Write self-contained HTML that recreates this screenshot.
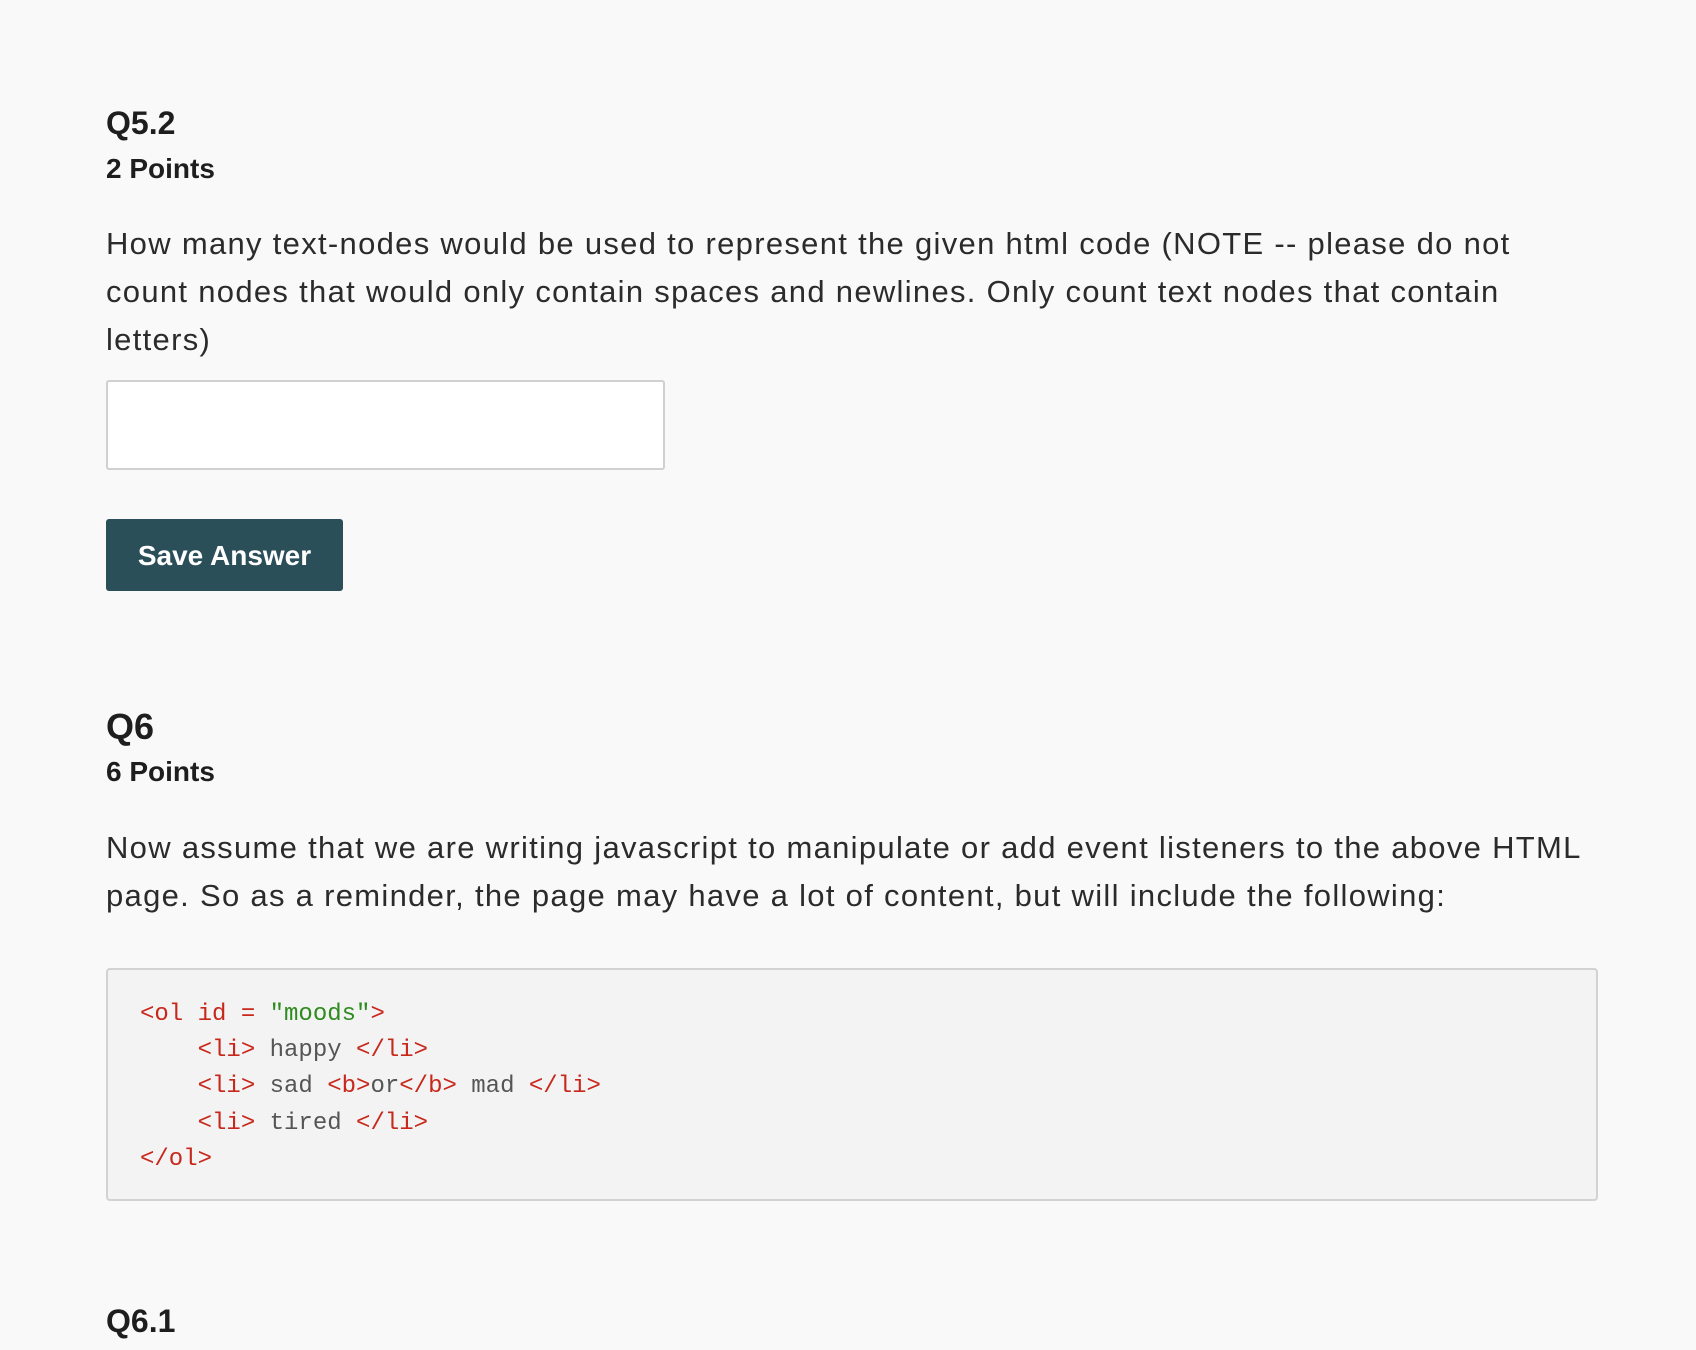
<!DOCTYPE html>
<html><head><meta charset="utf-8"><style>
body{margin:0;background:#f9f9f9;width:1696px;height:1350px;overflow:hidden;font-family:"Liberation Sans",sans-serif;color:#2b2b2b;position:relative}
.a{position:absolute;left:106px;white-space:nowrap}
.h{font-weight:bold;color:#1e1e1e}
.p{font-size:31px;letter-spacing:1.3px}
.code{position:absolute;left:106px;top:968px;width:1492px;height:233px;background:#f3f3f3;border:2px solid #d2d2d2;border-radius:4px;box-sizing:border-box}
.c{position:absolute;font-family:"Liberation Mono",monospace;font-size:24px;color:#555;white-space:pre}
.t{color:#c8281c}.s{color:#2e8b1e}
</style></head><body>
<div class="a h" style="top:105px;font-size:32px">Q5.2</div>
<div class="a h" style="top:153px;font-size:28px">2 Points</div>
<div class="a p" style="top:226px">How many text-nodes would be used to represent the given html code (NOTE -- please do not</div>
<div class="a p" style="top:274px">count nodes that would only contain spaces and newlines. Only count text nodes that contain</div>
<div class="a p" style="top:322px">letters)</div>
<div style="position:absolute;left:106px;top:380px;width:559px;height:90px;background:#fff;border:2px solid #d0d0d0;border-radius:3px;box-sizing:border-box"></div>
<div style="position:absolute;left:106px;top:519px;width:237px;height:72px;background:#2a4f58;border-radius:3px;color:#fff;font-weight:bold;font-size:28px;line-height:74px;text-align:center">Save Answer</div>
<div class="a h" style="top:706px;font-size:36px">Q6</div>
<div class="a h" style="top:756px;font-size:28px">6 Points</div>
<div class="a p" style="top:830px">Now assume that we are writing javascript to manipulate or add event listeners to the above HTML</div>
<div class="a p" style="top:878px">page. So as a reminder, the page may have a lot of content, but will include the following:</div>
<div class="code"></div>
<div class="c" style="left:140px;top:1001px"><span class="t">&lt;ol id = </span><span class="s">"moods"</span><span class="t">&gt;</span></div>
<div class="c" style="left:140px;top:1037px">    <span class="t">&lt;li&gt;</span> happy <span class="t">&lt;/li&gt;</span></div>
<div class="c" style="left:140px;top:1073px">    <span class="t">&lt;li&gt;</span> sad <span class="t">&lt;b&gt;</span>or<span class="t">&lt;/b&gt;</span> mad <span class="t">&lt;/li&gt;</span></div>
<div class="c" style="left:140px;top:1110px">    <span class="t">&lt;li&gt;</span> tired <span class="t">&lt;/li&gt;</span></div>
<div class="c" style="left:140px;top:1146px"><span class="t">&lt;/ol&gt;</span></div>
<div class="a h" style="top:1303px;font-size:32px">Q6.1</div>
</body></html>
